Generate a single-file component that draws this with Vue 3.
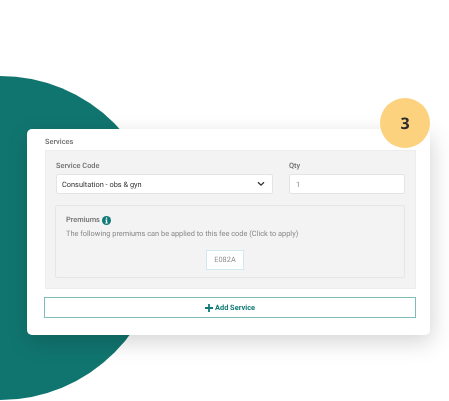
<script setup>
const premium = 'E082A'
</script>

<template>
  <div class="page">
    <div class="blob"></div>
    <section class="card">
      <div class="badge"><span class="soft">3</span></div>
      <h2 class="title soft">Services</h2>
      <div class="panel">
        <div class="fields">
          <div class="field code">
            <label class="soft">Service Code</label>
            <div class="control select">
              <span class="soft">Consultation - obs &amp; gyn</span>
              <svg class="soft" width="8" height="6" viewBox="0 0 8 6"><path d="M1 1.2 4 4.2 7 1.2" fill="none" stroke="#333" stroke-width="1.3"/></svg>
            </div>
          </div>
          <div class="field qty">
            <label class="soft">Qty</label>
            <div class="control qty-input"><span class="soft">1</span></div>
          </div>
        </div>
        <div class="premiums">
          <div class="prem-head soft">
            <span>Premiums</span>
            <svg width="9" height="9" viewBox="0 0 9 9"><circle cx="4.5" cy="4.5" r="4.5" fill="#0f7a78"/><rect x="3.9" y="1.5" width="1.3" height="1.3" fill="#fff"/><path d="M3.4 3.6H5.2V6.6H5.8V7.4H3.3V6.6H3.9V4.4H3.4Z" fill="#fff"/></svg>
          </div>
          <p class="prem-text soft">The following premiums can be applied to this fee code (Click to apply)</p>
          <div class="chip-row"><div class="chip"><span class="soft">{{ premium }}</span></div></div>
        </div>
      </div>
      <button class="add" type="button">
        <svg class="soft" width="8" height="8" viewBox="0 0 8 8"><path d="M4 0V8M0 4H8" stroke="#0f7a78" stroke-width="1.8"/></svg>
        <span class="soft">Add Service</span>
      </button>
    </section>
  </div>
</template>

<style scoped>
.page {
  position: relative;
  width: 449px;
  height: 401px;
  overflow: hidden;
  background: #fff;
  padding: 129px 0 0 27px;
  box-sizing: border-box;
  font-family: Roboto, "Liberation Sans", sans-serif;
  text-rendering: geometricPrecision;
}
.soft {
  filter: blur(0.3px);
}
.blob {
  position: absolute;
  left: -162px;
  top: 76px;
  width: 324px;
  height: 324px;
  border-radius: 50%;
  background: #11756f;
}
.card {
  position: relative;
  width: 403px;
  height: 206px;
  box-sizing: border-box;
  padding: 8px 14px 0 17px;
  background: #fff;
  border-radius: 5px;
  box-shadow: 2px 7px 22px rgba(0, 0, 0, 0.17);
}
.badge {
  position: absolute;
  right: 0;
  top: -31px;
  width: 50px;
  height: 50px;
  border-radius: 50%;
  background: #fdd27f;
  color: #2b2b2b;
  font: 700 16px/50px "Open Sans", sans-serif;
  text-align: center;
}
.badge span {
  display: inline-block;
}
.title {
  margin: 0 0 3px 1px;
  font-size: 7.4px;
  line-height: 10px;
  font-weight: 500;
  color: #6e6e6e;
}
.panel {
  margin-left: 1px;
  width: 371px;
  height: 139px;
  box-sizing: border-box;
  padding: 10px 10px 0 10px;
  background: #f3f3f3;
  border: 1px solid #ededed;
}
.fields {
  display: flex;
  gap: 16px;
}
.field label {
  display: block;
  height: 13px;
  font-size: 7.4px;
  line-height: 10px;
  font-weight: 500;
  color: #6e6e6e;
}
.code { width: 217px; }
.qty { width: 116px; }
.control {
  height: 20px;
  box-sizing: border-box;
  display: flex;
  align-items: center;
  background: #fff;
  border: 1px solid #e4e4e4;
  border-radius: 2px;
  font-size: 7.4px;
}
.select {
  justify-content: space-between;
  padding: 0 7px 0 5px;
  color: #333;
}
.qty-input {
  padding: 0 6px;
  color: #888;
}
.premiums {
  margin-top: 11px;
  width: 350px;
  height: 73px;
  box-sizing: border-box;
  margin-left: -1px;
  padding: 9px 10px 0;
  border: 1px solid #e6e6e6;
  border-radius: 2px;
}
.prem-head {
  display: flex;
  align-items: center;
  gap: 2px;
  font-size: 7.4px;
  line-height: 10px;
  font-weight: 500;
  color: #6e6e6e;
}
.prem-text {
  margin: 4px 0 0;
  font-size: 7.4px;
  line-height: 10px;
  color: #888;
}
.chip-row {
  display: flex;
  justify-content: center;
  margin-top: 11px;
  padding-right: 10px;
}
.chip {
  width: 38px;
  height: 20px;
  box-sizing: border-box;
  background: #fff;
  border: 1px solid #cfe9f1;
  font-size: 7.4px;
  line-height: 18px;
  text-align: center;
  color: #909090;
}
.chip span {
  display: inline-block;
}
.add {
  margin-top: 8px;
  width: 372px;
  height: 21px;
  box-sizing: border-box;
  display: flex;
  align-items: center;
  justify-content: center;
  gap: 2px;
  background: #fff;
  border: 1px solid #7fbcb7;
  padding: 0;
  color: #0f7a74;
  font: 700 7.4px Roboto, sans-serif;
  text-rendering: geometricPrecision;
}
</style>
